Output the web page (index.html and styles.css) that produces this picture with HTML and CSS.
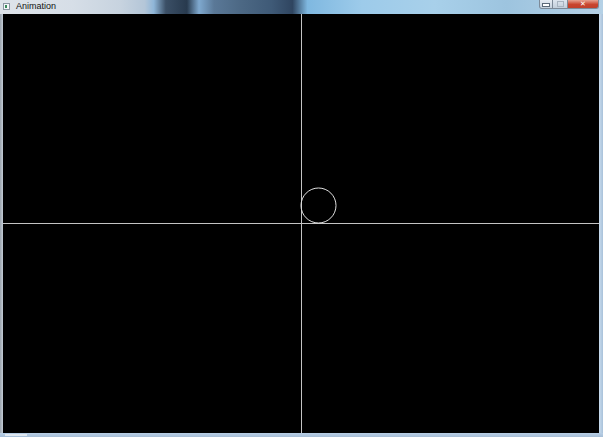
FILE: index.html
```html
<!DOCTYPE html>
<html>
<head>
<meta charset="utf-8">
<link rel="stylesheet" href="styles.css">
</head>
<body>
<div class="window">
  <div class="titlebar">
    <div class="app-icon"><div class="app-icon-inner"></div></div>
    <div class="title">Animation</div>
    <div class="caption">
      <div class="btn btn-min"><div class="min-glyph"></div></div>
      <div class="btn btn-max"><div class="max-glyph"></div></div>
      <div class="btn btn-close">&#x2715;</div>
    </div>
  </div>
  <div class="body">
    <div class="side side-left"></div>
    <div class="canvas">
      <svg width="596" height="419" viewBox="0 0 596 419">
        <line x1="298.5" y1="0" x2="298.5" y2="419" stroke="#c4c4c4" stroke-width="1"/>
        <line x1="0" y1="209.5" x2="596" y2="209.5" stroke="#c4c4c4" stroke-width="1"/>
        <circle cx="315.5" cy="191.5" r="17.5" fill="none" stroke="#e0e0e0" stroke-width="1"/>
      </svg>
    </div>
    <div class="side side-right"></div>
  </div>
  <div class="bottom"><div class="grip"></div></div>
</div>
</body>
</html>
```
FILE: styles.css
```css
html, body {
  margin: 0;
  padding: 0;
  background: #ffffff;
  width: 606px;
  height: 440px;
  overflow: hidden;
}
.window {
  width: 603px;
  height: 437px;
  display: flex;
  flex-direction: column;
  background: #c4d6e8;
}
.titlebar {
  height: 14px;
  display: flex;
  align-items: flex-start;
  background: linear-gradient(90deg,
    #dfe4ea 0%, #d6dee7 12%, #c7d3df 20%, #b4c6d8 24%,
    #8fb6d8 25.5%, #3b4f66 27.5%, #283a4e 31%,
    #7fa9cf 33%, #5a7897 35.5%, #4c6884 40%, #3f5a77 45%,
    #2f4560 48.5%, #7fb8e0 51%, #9dcbea 60%, #a8d0ea 72%,
    #9dc4df 84%, #b5d1e6 100%);
  font-family: "Liberation Sans", Arial, sans-serif;
}
.app-icon {
  width: 7px;
  height: 7px;
  margin: 3px 0 0 3px;
  background: #f4f6f8;
  border: 1px solid #8d97a3;
  box-sizing: border-box;
  display: flex;
  padding: 1px;
}
.app-icon-inner {
  width: 2px;
  height: 3px;
  background: #3a8a5a;
}
.title {
  font-size: 9px;
  line-height: 11px;
  margin: 1px 0 0 6px;
  color: #111;
}
.caption {
  margin-left: auto;
  margin-right: 4px;
  display: flex;
  height: 9px;
}
.btn {
  height: 9px;
  box-sizing: border-box;
  border: 1px solid #7d8a98;
  border-top: none;
  display: flex;
  align-items: center;
  justify-content: center;
}
.btn-min {
  width: 14px;
  background: linear-gradient(#e6ecf3, #c6d2de);
  border-radius: 0 0 0 3px;
}
.min-glyph {
  width: 6px;
  height: 2px;
  background: #ffffff;
  border: 1px solid #5c6a78;
  margin-top: 2px;
}
.btn-max {
  width: 15px;
  border-left: none;
  background: linear-gradient(#dde5ee, #c3cfdb);
}
.max-glyph {
  width: 5px;
  height: 4px;
  border: 1px solid #a8b4c0;
}
.btn-close {
  width: 31px;
  border-left: none;
  background: linear-gradient(#e7a290, #c9452e 55%, #c0402c);
  border-radius: 0 0 3px 0;
  color: #ffffff;
  font-size: 7px;
  font-weight: bold;
  line-height: 8px;
  font-family: "DejaVu Sans", sans-serif;
}
.body {
  display: flex;
  height: 419px;
}
.side-left {
  width: 3px;
  background: linear-gradient(90deg, #9aa3ac, #c3ccd6);
}
.side-right {
  width: 4px;
  background: linear-gradient(90deg, #c9dcee, #a9c2da);
}
.canvas {
  width: 596px;
  height: 419px;
  background: #000000;
}
.canvas svg {
  display: block;
}
.bottom {
  height: 4px;
  background: linear-gradient(#b8cfe6, #a6bed6);
  display: flex;
}
.grip {
  width: 22px;
  height: 2px;
  margin: 1px 0 0 5px;
  background: #dfe8f1;
}
```
